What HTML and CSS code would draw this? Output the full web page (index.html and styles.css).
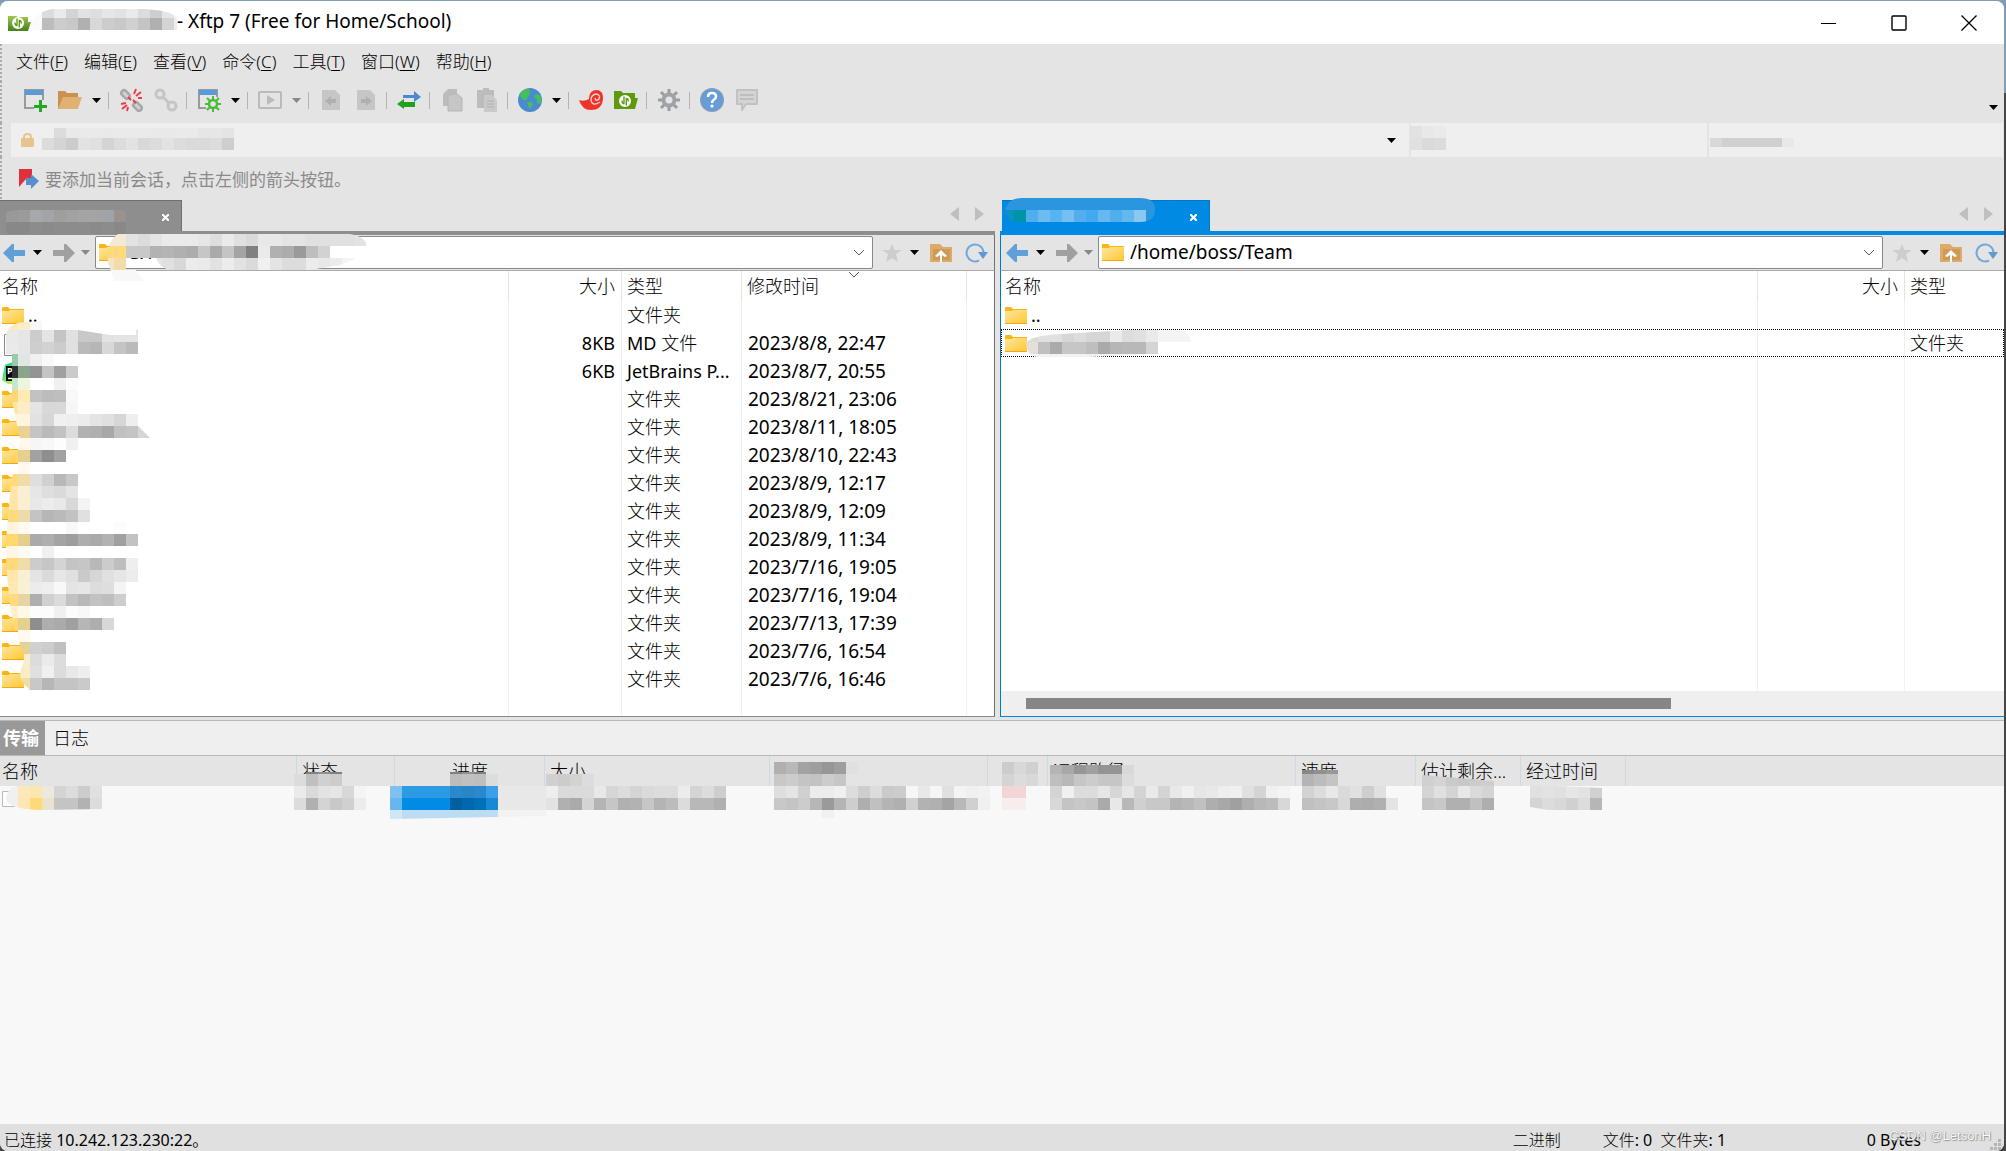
FILE: index.html
```html
<!DOCTYPE html>
<html lang="zh-CN">
  <head>
    <meta charset="UTF-8" />
    <meta name="viewport" content="width=device-width, initial-scale=1.0" />
    <title>Xftp 7</title>
    <link rel="stylesheet" href="styles.css">
  </head>
  <body>
    <svg class="sprite" aria-hidden="true">
      <defs>
        <linearGradient id="gold" x1="0" y1="0" x2="1" y2="1">
          <stop offset="0" stop-color="#ffe59d" />
          <stop offset="1" stop-color="#ffc934" />
        </linearGradient>
        <linearGradient id="green" x1="0" y1="0" x2="0" y2="1">
          <stop offset="0" stop-color="#a0c850" />
          <stop offset="1" stop-color="#48801c" />
        </linearGradient>
        <linearGradient id="jb" x1="0" y1="0" x2="1" y2="1">
          <stop offset="0.2" stop-color="#21d789" />
          <stop offset="0.9" stop-color="#fcf84a" />
        </linearGradient>
      </defs>
      <symbol id="folder" viewBox="0 0 22 17">
        <path d="M0 1q0-1 1-1h5l2 2h14v14H0z" fill="#fbb516" />
        <path d="M0 4h7l1-1h14v13H0z" fill="url(#gold)" />
        <path d="M0 16h22v1H0z" fill="#f0a818" />
      </symbol>
      <symbol id="caret" viewBox="0 0 9 5">
        <path d="M0 0h9L4.500 5z" fill="currentColor" />
      </symbol>
      <symbol id="back" viewBox="0 0 22 18">
        <path d="M0 9 9 0h2v6h11v6H11v6H9z" fill="currentColor" />
      </symbol>
      <symbol id="forward" viewBox="0 0 22 18">
        <path d="M22 9 13 0h-2v6H0v6h11v6h2z" fill="currentColor" />
      </symbol>
      <symbol id="chevron" viewBox="0 0 12 7">
        <path d="M1 1l5 5 5-5" fill="none" stroke="#555" />
      </symbol>
      <symbol id="star" viewBox="0 0 20 18">
        <path d="M10 0l2.500 6H20l-6 4 2 8-6-4-6 4 2-8-6-4h7.500z" fill="#cdcdcd" />
      </symbol>
      <symbol id="up" viewBox="0 0 22 18">
        <path d="M0 0h10l3 3h9v15H0z" fill="#dcab69" />
        <path d="M3 5h17v11H3z" fill="#cf9a56" />
        <path d="M11 6l6 6-2 1-3-2v7h-2v-7l-3 2-2-1z" fill="#fff" />
      </symbol>
      <symbol id="refresh" viewBox="0 0 24 20">
        <path d="M15 17.500A8.500 8.500 0 1 1 19.500 9" fill="none" stroke="#6ea9dc" stroke-width="2" />
        <path d="M14 9h10l-5 7z" fill="#5b9bd5" />
      </symbol>
      <symbol id="tab-close" viewBox="0 0 7 7">
        <path d="M0 0l7 7M7 0L0 7" stroke="#fff" stroke-width="2" />
      </symbol>
      <symbol id="left" viewBox="0 0 9 14">
        <path d="M9 0v14L0 7z" fill="#bfbfbf" />
      </symbol>
      <symbol id="right" viewBox="0 0 9 14">
        <path d="M0 0v14l9-7z" fill="#bfbfbf" />
      </symbol>
      <symbol id="xswirl" viewBox="0 0 12 12">
        <circle cx="6" cy="6" r="6" fill="#fff" />
        <path d="M5 1.500v7q-2 0-2-3" fill="none" stroke="#5d9a10" stroke-width="1.400" />
        <path d="M7.300 10.500v-7q2 0 2 3" fill="none" stroke="#5d9a10" stroke-width="1.400" />
      </symbol>
    </svg>

    <div class="window">
      <header class="titlebar">
        <svg class="app-icon" viewBox="0 0 23 16">
          <path d="M0 1h8l2 1h10v5h3l-3 9H0z" fill="url(#green)" />
          <use href="#xswirl" x="4" y="2" width="12" height="12" />
        </svg>
        <h1>- Xftp 7 (Free for Home/School)</h1>
        <button class="win-btn" aria-label="最小化">
          <svg width="16" height="16"><path d="M0 8.500h15" stroke="#000" /></svg>
        </button>
        <button class="win-btn" aria-label="最大化">
          <svg width="16" height="16"><rect x="1" y="1" width="14" height="14" rx="1" fill="none" stroke="#000" stroke-width="1.400" /></svg>
        </button>
        <button class="win-btn" aria-label="关闭">
          <svg width="16" height="16"><path d="M0.500 0.500l15 15M15.500 0.500l-15 15" stroke="#000" stroke-width="1.300" /></svg>
        </button>
        <svg class="mask" id="mask-title"></svg>
      </header>

      <nav class="menubar grip">
        <a href="#">文件(<u>F</u>)</a>
        <a href="#">编辑(<u>E</u>)</a>
        <a href="#">查看(<u>V</u>)</a>
        <a href="#">命令(<u>C</u>)</a>
        <a href="#">工具(<u>T</u>)</a>
        <a href="#">窗口(<u>W</u>)</a>
        <a href="#">帮助(<u>H</u>)</a>
      </nav>

      <div class="toolbar grip">
        <button class="tool" aria-label="新建">
          <svg viewBox="0 0 24 24">
            <path d="M1 1h20v20H1z" fill="#9a9a9a" />
            <path d="M3 7h16v12H3z" fill="#e6e6e6" />
            <path d="M2 2h18v5H2z" fill="#5b9bd5" />
            <path d="M11 12h13v12H11z" fill="#e4e4e4" />
            <path d="M16 12h3v5h5v3h-5v4h-3v-4h-5v-3h5z" fill="#22a822" />
          </svg>
        </button>
        <button class="tool" aria-label="打开">
          <svg viewBox="0 0 24 24">
            <path d="M0 3h7l2 2h11v5H5L1 21H0z" fill="#c9924f" />
            <path d="M5 9h19l-4 12H0z" fill="#e0b074" />
          </svg>
        </button>
        <button class="drop" aria-label="打开列表"><svg><use href="#caret" /></svg></button>
        <span class="sep"></span>
        <button class="tool" aria-label="断开">
          <svg viewBox="0 0 24 24" fill="none">
            <path d="M5 5l3 3M17 17l3 3" stroke="#a8a8a8" stroke-width="8" stroke-linecap="round" />
            <path d="M5 5l3 3M17 17l3 3" stroke="#d2d2d2" stroke-width="3" stroke-linecap="round" />
            <path d="M9 9l3 3M14 12l3 3M17 1l-2 5M22 4l-5 4M23 10h-4M2 16l5-1M3 21l5-4M8 23l1-4" stroke="#ee3c46" stroke-width="2" />
          </svg>
        </button>
        <button class="tool" aria-label="重新连接" disabled>
          <svg viewBox="0 0 24 24" fill="none" stroke="#c5c5c5" stroke-width="3">
            <rect x="2" y="2" width="8" height="8" rx="4" />
            <rect x="14" y="14" width="8" height="8" rx="4" />
            <path d="M8 8l8 8" />
          </svg>
        </button>
        <span class="sep"></span>
        <button class="tool" aria-label="属性">
          <svg viewBox="0 0 24 24">
            <path d="M1 1h20v20H1z" fill="#9a9a9a" />
            <path d="M3 7h16v12H3z" fill="#e6e6e6" />
            <path d="M2 2h18v5H2z" fill="#5b9bd5" />
            <circle cx="16" cy="16" r="8" fill="#e4e4e4" />
            <circle cx="16" cy="16" r="4" fill="#e4e4e4" stroke="#4cbb3c" stroke-width="2.500" />
            <path d="M16 8v4M16 20v4M8 16h4M20 16h4M10 10l3 3M19 19l3 3M22 10l-3 3M13 19l-3 3" stroke="#4cbb3c" stroke-width="2" />
          </svg>
        </button>
        <button class="drop" aria-label="属性列表"><svg><use href="#caret" /></svg></button>
        <span class="sep"></span>
        <button class="tool" aria-label="运行" disabled>
          <svg viewBox="0 0 24 24">
            <rect x="1" y="4" width="22" height="16" rx="1" fill="none" stroke="#bbb" stroke-width="2" />
            <path d="M9 7l8 5-8 5z" fill="#bbb" />
          </svg>
        </button>
        <button class="drop" aria-label="运行列表" disabled><svg><use href="#caret" /></svg></button>
        <span class="sep"></span>
        <button class="tool" aria-label="传入" disabled>
          <svg viewBox="0 0 24 24">
            <path d="M3 2h13l5 5v15H3z" fill="#c6c6c6" />
            <path d="M6 13l6-5v3h5v4h-5v3z" fill="#b0b0b0" />
          </svg>
        </button>
        <button class="tool" aria-label="传出" disabled>
          <svg viewBox="0 0 24 24">
            <path d="M3 2h13l5 5v15H3z" fill="#c6c6c6" />
            <path d="M18 13l-6-5v3H7v4h5v3z" fill="#b0b0b0" />
          </svg>
        </button>
        <span class="sep"></span>
        <button class="tool" aria-label="同步">
          <svg viewBox="0 0 24 24">
            <path d="M6 7h11V3l7 6-7 5v-4H6z" fill="#4a8bd0" />
            <path d="M18 14v5H7v2l-7-5 7-5v3z" fill="#22a01e" />
          </svg>
        </button>
        <span class="sep"></span>
        <button class="tool" aria-label="复制" disabled>
          <svg viewBox="0 0 24 24">
            <path d="M8 1h9v17H3V6z" fill="#bcbcbc" />
            <path d="M11 6h6l5 4v13H8V9z" fill="#c6c6c6" stroke="#b4b4b4" />
          </svg>
        </button>
        <button class="tool" aria-label="粘贴" disabled>
          <svg viewBox="0 0 24 24">
            <path d="M2 2h6V0h6v2h5v18H2z" fill="#bcbcbc" />
            <path d="M9 7h8l5 5v12H9z" fill="#cacaca" />
            <path d="M12 13h7M12 16h7M12 19h7" stroke="#b0b0b0" />
          </svg>
        </button>
        <span class="sep"></span>
        <button class="tool" aria-label="语言">
          <svg viewBox="0 0 24 24">
            <circle cx="12" cy="12" r="12" fill="#4a8ace" />
            <path d="M3 4Q8 0 12 1q-1 3 0 5l-4 6-3 0-3-4zM16 7q2-1 6 0 3 6 0 9-4 0-3-5-3 0-3-4zM9 14l5 0 1 3-3 4q-2-3-3-7z" fill="#45bf5e" />
          </svg>
        </button>
        <button class="drop" aria-label="语言列表"><svg><use href="#caret" /></svg></button>
        <span class="sep"></span>
        <button class="tool" aria-label="Xshell">
          <svg viewBox="0 0 24 24">
            <path d="M0 12q5 2 10-1 0-9 8-9 6 1 6 7 0 13-12 13Q3 22 0 12z" fill="#ee3428" />
            <path d="M21 14q-8 5-9-2 0-5 5-6 5 1 3 5-3 3-4-1" fill="none" stroke="#f6d0cc" stroke-width="1.400" />
          </svg>
        </button>
        <button class="tool" aria-label="Xftp">
          <svg viewBox="0 0 24 24">
            <path d="M0 3h7l2 2h12v5h3l-3 11H0z" fill="#5f9a0c" />
            <use href="#xswirl" x="5" y="7" width="12" height="12" />
          </svg>
        </button>
        <span class="sep"></span>
        <button class="tool" aria-label="选项">
          <svg viewBox="0 0 24 24">
            <path d="M12 1v22M1 12h22M4 4l16 16M20 4L4 20" stroke="#9a9d9f" stroke-width="3" />
            <circle cx="12" cy="12" r="5.500" fill="#e4e4e4" stroke="#a0a3a5" stroke-width="4" />
          </svg>
        </button>
        <span class="sep"></span>
        <button class="tool" aria-label="帮助">
          <svg viewBox="0 0 24 24">
            <circle cx="12" cy="12" r="12" fill="#8c9db0" />
            <circle cx="12" cy="12" r="11" fill="#689cd6" />
            <path d="M8 9q0-4 4-4t4 3.500q0 2-2.500 3.500Q12 13 12 15" fill="none" stroke="#fff" stroke-width="2.500" />
            <circle cx="12" cy="18" r="1.600" fill="#fff" />
          </svg>
        </button>
        <button class="tool" aria-label="反馈" disabled>
          <svg viewBox="0 0 24 24">
            <path d="M2 2h20v14H11l-4 6v-6H2z" fill="#d4d4d4" stroke="#c2c2c2" stroke-width="2" stroke-linejoin="round" />
            <path d="M5 7h14M5 11h14" stroke="#bebebe" stroke-width="2" />
          </svg>
        </button>
        <button class="drop overflow" aria-label="更多"><svg><use href="#caret" /></svg></button>
      </div>

      <div class="hostbar grip">
        <div class="host-field host-name">
          <svg class="lock" viewBox="0 0 13 14">
            <path d="M3 6V4q0-3 3.500-3T10 4v2" fill="none" stroke="#e9c38e" stroke-width="2" />
            <rect y="5" width="13" height="9" rx="1" fill="#e9c38e" />
          </svg>
          <input type="text" aria-label="主机" />
          <button class="drop" aria-label="主机列表"><svg><use href="#caret" /></svg></button>
        </div>
        <div class="host-field host-user"><input type="text" aria-label="用户名" /></div>
        <div class="host-field host-pass"><input type="text" aria-label="密码" /></div>
        <svg class="mask" id="mask-host"></svg>
      </div>

      <div class="linkbar grip">
        <svg class="bookmark" viewBox="0 0 20 20">
          <path d="M0 0h13v14l-6-4-7 8z" fill="#e0303c" />
          <path d="M7 9h5V5l8 7-8 8v-4H7z" fill="#5590cc" />
        </svg>
        <span>要添加当前会话，点击左侧的箭头按钮。</span>
      </div>

      <main class="panes">
        <section class="pane local">
          <div class="tabs">
            <button class="tab" aria-label="本地"><svg class="close"><use href="#tab-close" /></svg></button>
            <button class="scroll" aria-label="上一个"><svg><use href="#left" /></svg></button>
            <button class="scroll" aria-label="下一个"><svg><use href="#right" /></svg></button>
          </div>
          <div class="nav">
            <button class="go back" aria-label="后退"><svg><use href="#back" /></svg></button>
            <button class="drop" aria-label="后退列表"><svg><use href="#caret" /></svg></button>
            <button class="go" aria-label="前进" disabled><svg><use href="#forward" /></svg></button>
            <button class="drop" aria-label="前进列表" disabled><svg><use href="#caret" /></svg></button>
            <div class="path">
              <svg class="folder"><use href="#folder" /></svg>
              <input type="text" aria-label="本地路径" value="C:\" />
              <button class="expand" aria-label="展开"><svg><use href="#chevron" /></svg></button>
            </div>
            <button class="act" aria-label="书签"><svg width="20" height="18"><use href="#star" /></svg></button>
            <button class="drop" aria-label="书签列表"><svg><use href="#caret" /></svg></button>
            <button class="act" aria-label="上级"><svg width="22" height="18"><use href="#up" /></svg></button>
            <button class="act" aria-label="刷新"><svg width="24" height="20"><use href="#refresh" /></svg></button>
          </div>
          <table class="files">
            <colgroup><col class="c-name"><col class="c-size"><col class="c-type"><col class="c-date"><col></colgroup>
            <thead>
              <tr><th>名称</th><th class="size">大小</th><th>类型</th><th class="sorted">修改时间<svg class="sort"><use href="#chevron" /></svg></th><th></th></tr>
            </thead>
            <tbody>
              <tr><td><svg class="folder"><use href="#folder" /></svg>..</td><td></td><td class="kind">文件夹</td><td></td><td></td></tr>
              <tr><td><svg class="doc" viewBox="0 0 18 22"><path d="M.5.500h12l5 5v16H.5z" fill="#fff" stroke="#888" /></svg></td><td class="size">8KB</td><td>MD <span class="kind">文件</span></td><td class="date">2023/8/8, 22:47</td><td></td></tr>
              <tr><td><svg class="pc" viewBox="0 0 22 22"><path d="M3 3l8-3 9 4 2 10-8 8-8 0-6-4z" fill="url(#jb)" /><path d="M4 4h14v15H4z" /><path d="M6 16.500h6" stroke="#fff" stroke-width="1.500" /><text x="5" y="12" fill="#fff" font-size="9" font-weight="700">PC</text></svg></td><td class="size">6KB</td><td>JetBrains P...</td><td class="date">2023/8/7, 20:55</td><td></td></tr>
              <tr><td><svg class="folder"><use href="#folder" /></svg></td><td></td><td class="kind">文件夹</td><td class="date">2023/8/21, 23:06</td><td></td></tr>
              <tr><td><svg class="folder"><use href="#folder" /></svg></td><td></td><td class="kind">文件夹</td><td class="date">2023/8/11, 18:05</td><td></td></tr>
              <tr><td><svg class="folder"><use href="#folder" /></svg></td><td></td><td class="kind">文件夹</td><td class="date">2023/8/10, 22:43</td><td></td></tr>
              <tr><td><svg class="folder"><use href="#folder" /></svg></td><td></td><td class="kind">文件夹</td><td class="date">2023/8/9, 12:17</td><td></td></tr>
              <tr><td><svg class="folder"><use href="#folder" /></svg></td><td></td><td class="kind">文件夹</td><td class="date">2023/8/9, 12:09</td><td></td></tr>
              <tr><td><svg class="folder"><use href="#folder" /></svg></td><td></td><td class="kind">文件夹</td><td class="date">2023/8/9, 11:34</td><td></td></tr>
              <tr><td><svg class="folder"><use href="#folder" /></svg></td><td></td><td class="kind">文件夹</td><td class="date">2023/7/16, 19:05</td><td></td></tr>
              <tr><td><svg class="folder"><use href="#folder" /></svg></td><td></td><td class="kind">文件夹</td><td class="date">2023/7/16, 19:04</td><td></td></tr>
              <tr><td><svg class="folder"><use href="#folder" /></svg></td><td></td><td class="kind">文件夹</td><td class="date">2023/7/13, 17:39</td><td></td></tr>
              <tr><td><svg class="folder"><use href="#folder" /></svg></td><td></td><td class="kind">文件夹</td><td class="date">2023/7/6, 16:54</td><td></td></tr>
              <tr><td><svg class="folder"><use href="#folder" /></svg></td><td></td><td class="kind">文件夹</td><td class="date">2023/7/6, 16:46</td><td></td></tr>
              <tr class="rest"><td></td><td></td><td></td><td></td><td></td></tr>
            </tbody>
          </table>
          <svg class="mask" id="mask-local"></svg>
        </section>

        <section class="pane remote">
          <div class="tabs">
            <button class="tab" aria-label="远程"><svg class="close"><use href="#tab-close" /></svg></button>
            <button class="scroll" aria-label="上一个"><svg><use href="#left" /></svg></button>
            <button class="scroll" aria-label="下一个"><svg><use href="#right" /></svg></button>
          </div>
          <div class="nav">
            <button class="go back" aria-label="后退"><svg><use href="#back" /></svg></button>
            <button class="drop" aria-label="后退列表"><svg><use href="#caret" /></svg></button>
            <button class="go" aria-label="前进" disabled><svg><use href="#forward" /></svg></button>
            <button class="drop" aria-label="前进列表" disabled><svg><use href="#caret" /></svg></button>
            <div class="path">
              <svg class="folder"><use href="#folder" /></svg>
              <input type="text" aria-label="远程路径" value="/home/boss/Team" />
              <button class="expand" aria-label="展开"><svg><use href="#chevron" /></svg></button>
            </div>
            <button class="act" aria-label="书签"><svg width="20" height="18"><use href="#star" /></svg></button>
            <button class="drop" aria-label="书签列表"><svg><use href="#caret" /></svg></button>
            <button class="act" aria-label="上级"><svg width="22" height="18"><use href="#up" /></svg></button>
            <button class="act" aria-label="刷新"><svg width="24" height="20"><use href="#refresh" /></svg></button>
          </div>
          <table class="files">
            <colgroup><col><col class="r-size"><col class="r-type"></colgroup>
            <thead>
              <tr><th>名称</th><th class="size">大小</th><th>类型</th></tr>
            </thead>
            <tbody>
              <tr><td><svg class="folder"><use href="#folder" /></svg>..</td><td></td><td></td></tr>
              <tr class="focused"><td><svg class="folder"><use href="#folder" /></svg></td><td></td><td class="kind">文件夹</td></tr>
              <tr class="rest"><td></td><td></td><td></td></tr>
            </tbody>
          </table>
          <div class="hscroll"><div class="thumb"></div></div>
          <svg class="mask" id="mask-remote"></svg>
        </section>
      </main>

      <section class="transfers">
        <div class="ttabs">
          <button class="ttab active">传输</button>
          <button class="ttab">日志</button>
        </div>
        <table class="queue">
          <colgroup>
            <col class="q-name"><col class="q-status"><col class="q-progress"><col class="q-size"><col class="q-local">
            <col class="q-dir"><col class="q-remote"><col class="q-speed"><col class="q-eta"><col class="q-time"><col>
          </colgroup>
          <thead>
            <tr>
              <th>名称</th><th>状态</th><th class="center">进度</th><th>大小</th><th></th><th></th>
              <th>远程路径</th><th>速度</th><th>估计剩余...</th><th>经过时间</th><th></th>
            </tr>
          </thead>
          <tbody>
            <tr>
              <td><svg class="doc" viewBox="0 0 16 16"><path d="M.5.500h15v15H.5z" fill="#fff" stroke="#bbb" /></svg></td>
              <td></td><td></td><td></td><td></td><td></td><td></td><td></td><td></td><td></td><td></td>
            </tr>
          </tbody>
        </table>
        <svg class="mask" id="mask-queue"></svg>
      </section>

      <footer class="status">
        <span class="conn"><span class="kind">已连接</span> 10.242.123.230:22。</span>
        <span class="mode kind">二进制</span>
        <span class="count"><span class="kind">文件</span>: 0&nbsp; <span class="kind">文件夹</span>: 1</span>
        <span class="bytes">0 Bytes</span>
        <span class="watermark">CSDN @LetsonH</span>
        <svg class="resize" width="12" height="12" fill="#b4b4b4">
          <path d="M8 0h3v3H8zM4 4h3v3H4zM8 4h3v3H8zM0 8h3v3H0zM4 8h3v3H4zM8 8h3v3H8z" />
        </svg>
      </footer>
    </div>

    <script src="script.js"></script>
  </body>
</html>
```
FILE: styles.css
```css
* {
  box-sizing: border-box;
}

body {
  margin: 0;
  min-height: 100vh;
  display: flex;
  padding: 1px 2px 0 0;
  font-family: "Noto Sans", "Noto Sans CJK SC", sans-serif;
  font-size: 18px;
  color: #000;
  background: linear-gradient(#7f9db5 93px, #454545 93px);
}

button,
input {
  font: inherit;
  color: inherit;
  border: 0;
  padding: 0;
  background: none;
}

button {
  display: flex;
  align-items: center;
  justify-content: center;
}

input {
  min-width: 0;
  outline: 0;
}

.sprite {
  position: absolute;
  width: 0;
  height: 0;
}

.window {
  flex: 1;
  min-width: 0;
  display: flex;
  flex-direction: column;
  background: #e4e4e4;
  border-radius: 8px;
  overflow: hidden;
}

.mask {
  position: absolute;
  inset: 0;
  width: 100%;
  height: 100%;
  overflow: visible;
  pointer-events: none;
  shape-rendering: crispEdges;
}

/* title bar */
.titlebar {
  position: relative;
  display: flex;
  align-items: center;
  height: 43px;
  padding-left: 8px;
  background: #fff;
}

.titlebar h1 {
  flex: 1;
  margin: 0 0 0 146px;
  font-size: 19px;
  font-weight: 400;
  line-height: 38px;
  padding-bottom: 4px;
}

.app-icon {
  width: 23px;
  height: 16px;
}

.win-btn {
  width: 70px;
  height: 42px;
}

/* menu and toolbars */
.grip {
  background-image: radial-gradient(circle at 1px 1px, #aaa 1px, transparent 1px);
  background-size: 4px 4px;
  background-repeat: repeat-y;
}

.menubar {
  display: flex;
  gap: 16px;
  height: 37px;
  padding: 0 16px;
  font-size: 17px;
  font-weight: 300;
  line-height: 35px;
}

.menubar a {
  color: inherit;
  text-decoration: none;
}

.menubar u {
  text-underline-offset: 2px;
}

.toolbar {
  display: flex;
  align-items: center;
  height: 42px;
  padding: 0 2px 4px 17px;
}

.tool {
  width: 35px;
  height: 32px;
}

.tool svg {
  width: 24px;
  height: 24px;
}

.drop {
  width: 18px;
  height: 24px;
}

.drop svg {
  width: 9px;
  height: 5px;
}

.drop:disabled {
  color: #888;
}

.sep {
  width: 1px;
  height: 17px;
  margin: 0 4px 0 3px;
  background: #b4b4b4;
}

.overflow {
  margin-left: auto;
  align-self: flex-end;
}

.hostbar {
  position: relative;
  display: flex;
  gap: 2px;
  height: 34px;
  padding: 0 1px 0 11px;
}

.host-field {
  display: flex;
  align-items: center;
  background: #efefef;
}

.host-field input {
  flex: 1;
}

.host-name {
  flex: 1393;
  padding: 0 8px 0 10px;
}

.host-user {
  flex: 299;
}

.host-pass {
  flex: 297;
}

.lock {
  width: 13px;
  height: 14px;
}

.linkbar {
  display: flex;
  align-items: center;
  gap: 6px;
  height: 43px;
  padding-left: 19px;
  font-size: 17px;
  color: #8a8a8a;
}

.bookmark {
  width: 20px;
  height: 20px;
}

/* file panes */
.panes {
  display: grid;
  grid-template-columns: 995fr 1004fr;
  gap: 5px;
}

.pane {
  --accent: #8e8e8e;
  --edge: #707070;
  position: relative;
  display: flex;
  flex-direction: column;
  min-width: 0;
}

.remote {
  --accent: #008ae4;
  --edge: #0078c8;
}

.tabs {
  display: flex;
  align-items: center;
  height: 35px;
  padding-bottom: 4px;
  border-bottom: 4px solid var(--accent);
}

.remote .tabs {
  padding-left: 2px;
}

.tab {
  align-self: flex-start;
  justify-content: flex-end;
  width: 182px;
  height: 31px;
  margin-right: auto;
  padding: 2px 12px 0 0;
  background: var(--accent);
  border: 1px solid var(--edge);
  border-width: 1px 1px 0 0;
}

.remote .tab {
  width: 208px;
}

.close {
  width: 7px;
  height: 7px;
}

.scroll {
  width: 25px;
}

.scroll:last-child {
  margin-right: 3px;
}

.scroll svg {
  width: 9px;
  height: 14px;
}

.nav {
  display: flex;
  align-items: center;
  height: 36px;
  padding: 0 6px 0 3px;
  border: 1px solid #aaa;
  border-width: 0 0 1px;
}

.local .nav,
.local .files {
  border-right: 1px solid var(--edge);
}

.remote .nav,
.remote .files,
.hscroll {
  border-left: 1px solid var(--edge);
}

.remote .nav {
  padding-left: 5px;
}

.go {
  width: 22px;
  color: #a0a0a0;
}

.go svg {
  width: 22px;
  height: 18px;
}

.back {
  color: #619fd8;
}

.nav .drop {
  width: 24px;
}

.nav .go + .drop + .go {
  margin-left: 4px;
}

.nav .act + .drop {
  margin-right: 4px;
}

.nav .drop + .act {
  margin-right: 12px;
}

.nav .go:nth-child(3) + .drop {
  width: 20px;
}

.path {
  flex: 1;
  min-width: 0;
  display: flex;
  align-items: center;
  gap: 6px;
  height: 33px;
  margin-right: 9px;
  padding: 0 7px 0 3px;
  background: #fff;
  border: 1px solid #888;
  border-radius: 2px;
}

.path input {
  flex: 1;
  padding-bottom: 1px;
  font-size: 19px;
}

.expand svg,
.sort {
  width: 12px;
  height: 7px;
}

.folder {
  width: 22px;
  height: 17px;
}

.files,
.queue {
  width: 100%;
  table-layout: fixed;
  border-spacing: 0;
}

.files th,
.files td,
.queue th,
.queue td {
  height: 28px;
  padding: 0 0 0 5px;
  line-height: 28px;
  font-weight: 400;
  text-align: left;
  white-space: nowrap;
  overflow: hidden;
  border-left: 1px solid #e8f2fb;
}

.files th,
.queue th,
.files td.kind,
.kind {
  font-weight: 300;
}

.files {
  background: #fff;
}

.files th {
  height: 30px;
  border-left-color: #e4e4e4;
}

.files th:first-child,
.files td:first-child,
.queue th:first-child,
.queue td:first-child {
  padding-left: 2px;
  border-left: 0;
}

.remote .files th:first-child,
.remote .files td:first-child {
  padding-left: 4px;
}

.files .size {
  padding-right: 6px;
  text-align: right;
}

.files .date {
  padding-left: 6px;
  font-size: 19px;
}

.files td svg {
  margin-right: 4px;
  vertical-align: middle;
}

.files td .folder {
  margin-bottom: 3px;
}

.files .doc {
  width: 18px;
  height: 22px;
  margin-left: 2px;
}

.pc {
  width: 22px;
  height: 22px;
}

.sorted {
  position: relative;
}

.sort {
  position: absolute;
  top: 0;
  left: calc(50% - 6px);
}

.files .rest td {
  height: 23px;
}

.remote .rest td {
  height: 334px;
}

.local .files {
  border-bottom: 1px solid #888;
}

.focused {
  outline: 1px dotted #000;
  outline-offset: -1px;
}

.c-name { width: 508px; }
.c-size { width: 113px; }
.c-type { width: 120px; }
.c-date { width: 225px; }
.r-size { width: 147px; }
.r-type { width: 100px; }

.hscroll {
  height: 26px;
  padding: 7px 0 0 25px;
  background: #efefef;
  border-bottom: 1px solid #008ae4;
}

.thumb {
  width: 66%;
  height: 11px;
  background: #868686;
}

/* transfer list */
.transfers {
  position: relative;
  flex: 1;
  margin-top: 3px;
  background: #f8f8f8;
  border-top: 1px solid #b8b8b8;
}

.ttabs {
  display: flex;
  height: 35px;
  background: #efefef;
  border-bottom: 1px solid #b8b8b8;
}

.ttab {
  padding: 0 8px 2px;
  font-size: 18px;
  font-weight: 300;
}

.ttab.active {
  padding: 0 6px 2px 3px;
  font-weight: 700;
  color: #fff;
  background: #999;
}

.queue th {
  height: 30px;
  background: #e4e4e4;
  border-left-color: #ced9e6;
}

.queue td {
  border-left: 0;
}

.queue .center {
  padding-left: 57px;
}

.queue .doc {
  width: 16px;
  height: 16px;
}

.q-name { width: 296px; }
.q-status { width: 98px; }
.q-progress { width: 150px; }
.q-size { width: 225px; }
.q-local { width: 218px; }
.q-dir { width: 60px; }
.q-remote { width: 248px; }
.q-speed { width: 120px; }
.q-eta { width: 105px; }
.q-time { width: 105px; }

/* status bar */
.status {
  position: relative;
  display: flex;
  align-items: center;
  height: 27px;
  padding: 4px 83px 0 4px;
  font-size: 16px;
  line-height: 22px;
  background: #e0e0e0;
}

.conn {
  flex: 1;
}

.mode {
  width: 90px;
}

.count {
  flex: 0 0 264px;
}

.watermark {
  position: absolute;
  right: 13px;
  top: 3px;
  font: 13px/18px "Liberation Sans", Arial, sans-serif;
  color: #fafafa;
  text-shadow: 0 0 1px #888, 1px 1px 1px #999;
}

.resize {
  position: absolute;
  right: 2px;
  bottom: 0;
}
```
FILE: script.js
```javascript
// Blocks that hide private names. Each row is a list of 12px cells:
// two hex digits = grey level, six = colour, "--" = empty cell.
const CELL = 12;

const masks = {
  "mask-title": [
    {
      x: 30, y: 5,
      clip: "M30 30Q30 12 52 8H145Q178 10 177 20V29H42z",
      rows: [
        "fa dc ea d4 e2 de e6 e2 ea dc ce e6 ee",
        "fa bc cc c8 b0 d8 cc c8 d0 c4 b0 d4 ee",
      ],
    },
  ],
  "mask-host": [
    { x: 42, y: 5, rows: ["-- dc e9 ea ea e9 ea ea ea e9 e9 ea ea e6 e6 e4"] },
    { x: 42, y: 15, rows: ["dc d4 cc e2 e0 d4 dc e2 d8 dc e2 dc da da dc ce"] },
    { x: 1410, y: 3, rows: ["e2 e8 ea", "e0 da dc"] },
    { x: 1710, y: 15, clip: "M1700 15h100v9h-100z", rows: ["d8 d0 d0 d0 d0 d0 e8"] },
  ],
  "mask-local": [
    {
      x: 6, y: 10, clip: "M1 20Q2 9 20 10Q30 8 40 8H115Q126 9 126 16V34H8Q1 30 1 20z",
      rows: [
        "999999 9b9b9b a6a8ac a2a4a8 9e9e9a a2a2a2 a4a4a4 a4a4a4 a0a4a8 9a928e",
        "88 88 8c 8a 8c 8c 8c 8a 8c 88",
      ],
    },
    {
      x: 102, y: 34,
      clip: "M118 34H350Q365 36 367 46H330V58H358L340 65L310 70H170Q160 68 156 58H132Q134 72 145 81H114L108 62Q106 42 118 34z",
      rows: [
        "f4e9d4 f4e9d4 e2 dc e4 ea ea ea e6 de ea e0 da e8 e8 e4 e4 e0 e0 e0 e0 e2",
        "ffd97c ffd97c c8 c8 b2 b4 b0 ac c6 aa c4 a4 80 ea b0 ac 9a be d2",
        "f2e4c8 f2dcaa -- -- e4 e0 d8 ec ea e2 ec e2 da f0 e4 dc dc ec e8 ec f4",
        "f8 f8 f8 f8",
      ],
    },
    {
      x: 6, y: 118,
      clip: "M6 135Q8 122 28 122L42 121V130H78L110 135H136V130H138V154H6z",
      rows: [
        "fdeac0 feedc8 f8",
        "e9 e6 cc e4 c4 e0 c8 c8 e2 e4 e4",
        "ea e6 ce d2 cc e0 ba b6 d8 c4 ba",
      ],
    },
    {
      x: 6, y: 154,
      clip: "M12 154H160V490H30L22 482Q18 472 23 464Q26 456 22 450L15 430Q10 410 8 385Q4 345 8 320Q10 290 12 278L20 240L12 200z",
      rows: [
        "9accaa e2e6e2 f0 f9",
        "303030 8aa58e 94 c4 a0 ca",
        "c8e6c8 ecf6dc -- -- f0 fc",
        "fdd778 ffeab4 c2 bc be f8",
        "ffe6a8 fdecc8 e4 d8 d8 f6",
        "fff4dc fff4dc e2 d6 f0 ee ec e4 e0 d6 ee",
        "ffd970 e8d296 c4 ba c2 dc b2 b0 a8 c0 c4",
        "-- fff8ea f6 f8 fd f0",
        "ffd970 e6d090 a2 8e a2",
        "-- fff8ee",
        "ffd97a f0dca8 de d0 b8 c8",
        "ffe6ac faefd2 e6 de da e4",
        "fde7a8 faefd2 e8 ec e8 d8 f4",
        "fdda80 eedca8 c4 b6 ba c2 e0",
        "fff4dc fffaf0 -- -- -- f8 -- -- -- fc",
        "ffd970 e4d08c aa ae a4 9e ae aa b2 a0 c2",
        "fff6e4 fffaf4 -- f0",
        "ffd97c f0dca6 cc c6 d4 c4 c6 b8 cc be ee",
        "ffe6aa faefd2 e4 da e6 e0 ca d6 e0 e6 ec",
        "ffe8b4 faf0d4 ec ee f8 e4 e6 dc de f4",
        "ffdb80 e6d4a2 ae d0 da c2 b8 c2 be ce",
        "fff0cc fff8e6 fc fc f0 fc f8",
        "ffd978 e6d090 8e ae aa a0 b6 ae d8",
        "-- fffaf0",
        "-- e2d298 d0 cc c0",
        "-- faedcc dc ea dc",
        "-- faecc8 e0 f0 dc e8 ee",
        "-- f0dca4 c8 b6 c4 c4 ca",
      ],
    },
    { x: 138, y: 226, clip: "M138 226l12 12h-12z", rows: ["d6"] },
  ],
  "mask-remote": [
    {
      x: 2, y: -2, clip: "M5 10Q8 -2 22 -2H140Q156 -2 155 10Q155 22 140 22H18Q6 22 5 10z",
      rows: [
        "2b96e0 2b96e0 2b96e0 2b96e0 2b96e0 2b96e0 2b96e0 2b96e0 2b96e0 2b96e0 2b96e0 2b96e0 2b96e0",
        "0a92c0 0095a6 4eaeee 6cbcf0 58b4ee 74c0f2 54aeec 44aaee 66b8f0 50aeec 64b8f0 8ac8f4 2b96e0",
      ],
    },
    {
      x: 26, y: 130, clip: "M26 144Q28 136 60 134L130 130H180Q190 132 191 142H158V154H150L90 157H40Q28 158 26 144z",
      rows: [
        "dcdcd4 e0 e0 d6 dc d6 d6 ea dc e0 ea f4 f4 f4",
        "e2e0d8 c0 aa c6 c6 be aa b6 b8 b8 d4",
        "f2 f2 f2 f2 f2 f2 f2 f2 f2 f2",
      ],
    },
  ],
  "mask-queue": [
    {
      x: 6, y: 65, clip: "M6 77Q8 65 20 65H102V88L40 89Q6 88 6 77z",
      rows: ["f0 fce8b8 fce6b0 ece8dc d4 dc cc e0", "f0 fce6b4 ffd978 eae2cc c4 c4 b2 dc"],
    },
    {
      x: 294, y: 53, clip: "M294 51h48v2h24v36h-72z",
      rows: ["dc c0 d0 cc", "ea da e2 e6 d8 f4", "dc b0 d4 c8 d0 ec"],
    },
    { x: 306, y: 51, clip: "M306 51h36v2h-36z", rows: ["80 90 80"] },
    { x: 450, y: 51, clip: "M450 51h36v2h-36z", rows: ["80 90 80"] },
    { x: 450, y: 53, rows: ["bc c0 be dc"] },
    {
      x: 390, y: 65, clip: "M390 65h156v30l-156 2z",
      rows: [
        "7fc0ee 2b9be4 2b9be4 2b9be4 2b9be4 2b88cc 2886c6 2b88cc 3a9fe4 e8 e8 e8 e8",
        "68b6ee 008ce6 008ce6 008ce6 008ce6 0060a0 0068b0 0070b8 1688d4 e8 e8 e8 e8",
      ],
    },
    {
      x: 390, y: 89, clip: "M390 89h156v6l-156 3z",
      rows: ["cfe6f6 bcdcf4 bcdcf4 bcdcf4 bcdcf4 bcdcf4 bcdcf4 bcdcf4 bcdcf4 f2 f2 f2 f2"],
    },
    {
      x: 546, y: 53,
      rows: [
        "d0 cc d2 dc",
        "ee da da da e8 d6 dc d4 da dc dc ec d4 dc ce",
        "e2 b0 aa d4 b4 c6 b0 b2 c6 b4 bc dc b8 b8 b0",
      ],
    },
    {
      x: 774, y: 41,
      rows: [
        "b0 b8 a2 9e 96 9e e0",
        "c8 cc c4 c0c2c4 cc c6",
        "de e4 d0 ec ec f0 dc ce dc ca cc f6 e8 f6 e0 f4 f0 f2",
        "c8 c4 cc b6 9a b4 ce ae c0 b4 b0 d0 b2 b0 a4 b8 d0 f0",
      ],
    },
    { x: 822, y: 89, clip: "M822 89h12v8h-12z", rows: ["f0"] },
    { x: 1002, y: 41, rows: ["cc d8 d0", "d4 dc d8", "f2d6d6 f2d6d6", "f6eeec f6eeec"] },
    { x: 1050, y: 41, clip: "M1050 44h84v50h-84z", rows: ["b4 a8 96 a0 94 94 d8", "be b8 c6 cc c6 c6 dc"] },
    {
      x: 1050, y: 65,
      rows: [
        "d4 f0 dc dc e6 d6 e6 d4 ea d4 e8 f0 e6 e8 ee f0 e0 d4 f0 f4",
        "d8 c4 c8 c4 aa e8 b8 d0 c8 c8 b4 b8 c0 ae a8 a0 ae b8 bc d8",
      ],
    },
    { x: 1302, y: 49, clip: "M1302 49h36v4h-36z", rows: ["88 90 98"] },
    { x: 1302, y: 53, rows: ["b4 bc c4", "d2 dc e8 da e0 ce e0", "c0 c4 c8 d8 ae ac b0 e4"] },
    {
      x: 1422, y: 53, clip: "M1422 54l72 6v29h-72z",
      rows: ["d0 d4 ca c8 cc ce", "d4 e0 d4 e8 da d4", "c4 c8 b0 b0 c0 ae"],
    },
    {
      x: 1530, y: 65, clip: "M1530 64l72 3v22h-54l-18-3z",
      rows: ["e0 e2 e0 e6 e2 d0", "d4 dc d8 d0 dc b6"],
    },
  ],
};

const NS = "http://www.w3.org/2000/svg";

function make(name, attrs, parent) {
  const el = document.createElementNS(NS, name);
  for (const key in attrs) {
    el.setAttribute(key, attrs[key]);
  }
  parent.appendChild(el);
  return el;
}

for (const id in masks) {
  const svg = document.getElementById(id);
  masks[id].forEach((block, i) => {
    const group = make("g", {}, svg);
    if (block.clip) {
      const clip = make("clipPath", { id: `${id}-clip-${i}` }, svg);
      make("path", { d: block.clip }, clip);
      group.setAttribute("clip-path", `url(#${id}-clip-${i})`);
    }
    block.rows.forEach((row, r) => {
      row.split(" ").forEach((cell, c) => {
        if (cell === "--") return;
        const fill = "#" + (cell.length === 2 ? cell.repeat(3) : cell);
        make("rect", { x: block.x + c * CELL, y: block.y + r * CELL, width: CELL, height: CELL, fill }, group);
      });
    });
  });
}
```
